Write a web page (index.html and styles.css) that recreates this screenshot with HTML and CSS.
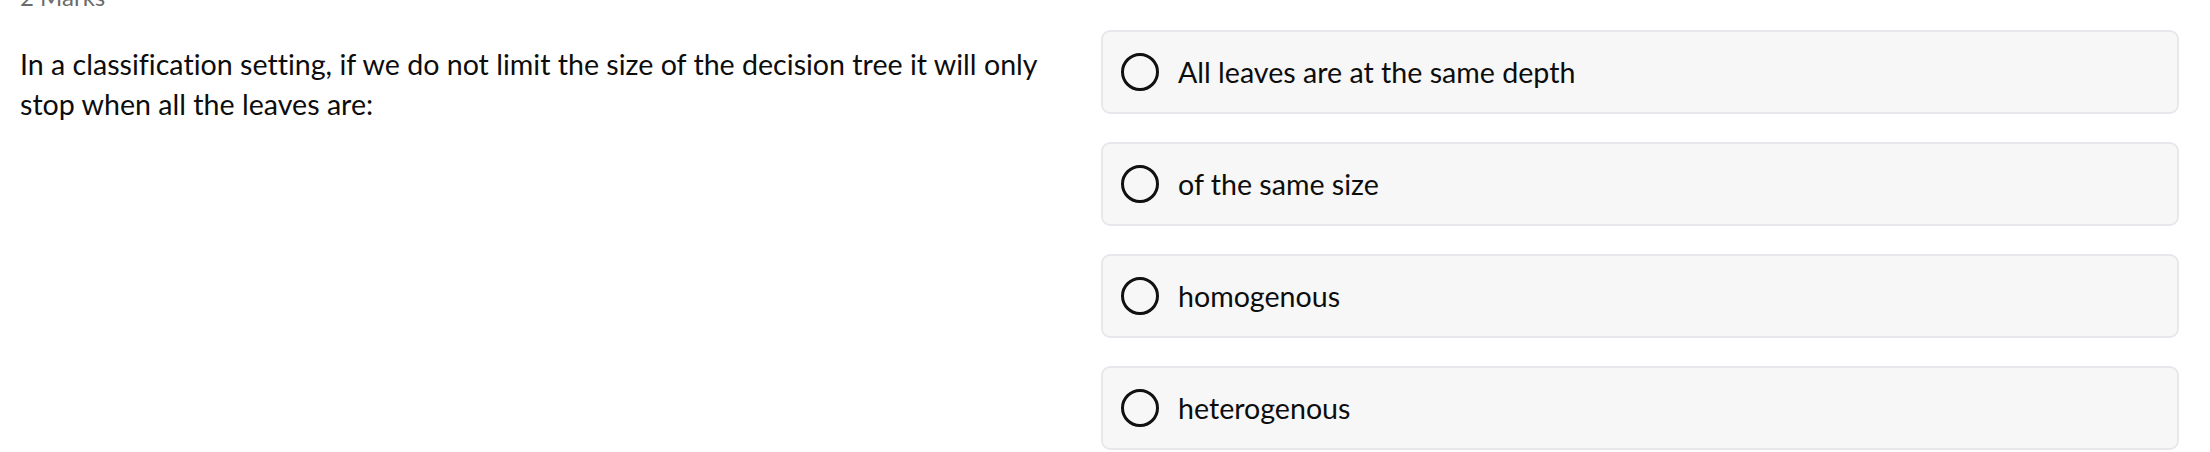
FILE: index.html
```html
<!DOCTYPE html>
<html lang="en">
<head>
<meta charset="utf-8">
<title>Quiz question</title>
<link rel="stylesheet" href="styles.css">
</head>
<body>
<div class="page">
  <div class="marks">2 Marks</div>
  <div class="question-row">
    <p class="question-text">In a classification setting, if we do not limit the size of the decision tree it will only stop when all the leaves are:</p>
    <div class="options">
      <label class="option"><span class="radio"></span><span class="option-text">All leaves are at the same depth</span></label>
      <label class="option"><span class="radio"></span><span class="option-text">of the same size</span></label>
      <label class="option"><span class="radio"></span><span class="option-text">homogenous</span></label>
      <label class="option"><span class="radio"></span><span class="option-text">heterogenous</span></label>
    </div>
  </div>
</div>
</body>
</html>
```

FILE: styles.css
```css
html, body {
  margin: 0;
  padding: 0;
  background: #ffffff;
}
body {
  font-family: "Lato", "Liberation Sans", sans-serif;
  color: #0d0d0d;
  font-variant-ligatures: none;
}
.page {
  padding: 0 31px 0 20px;
}
.marks {
  font-size: 24px;
  line-height: 24px;
  color: #6b6b6b;
  margin-top: -15px;
}
.question-row {
  margin-top: 21px;
  display: grid;
  grid-template-columns: 1fr 1078px;
  column-gap: 20px;
}
.question-text {
  margin: 0;
  padding-top: 14px;
  font-size: 28.6px;
  line-height: 40px;
  max-width: 1050px;
}
.options {
  display: flex;
  flex-direction: column;
  gap: 28px;
}
.option {
  box-sizing: border-box;
  height: 84px;
  display: flex;
  align-items: center;
  gap: 19px;
  padding-left: 18px;
  background: #f7f7f7;
  border: 2px solid #e8e8ec;
  border-radius: 9px;
}
.radio {
  box-sizing: border-box;
  width: 38px;
  height: 38px;
  border: 3.5px solid #111111;
  border-radius: 50%;
  flex: none;
}
.option-text {
  font-size: 28.6px;
  line-height: 40px;
}
```
